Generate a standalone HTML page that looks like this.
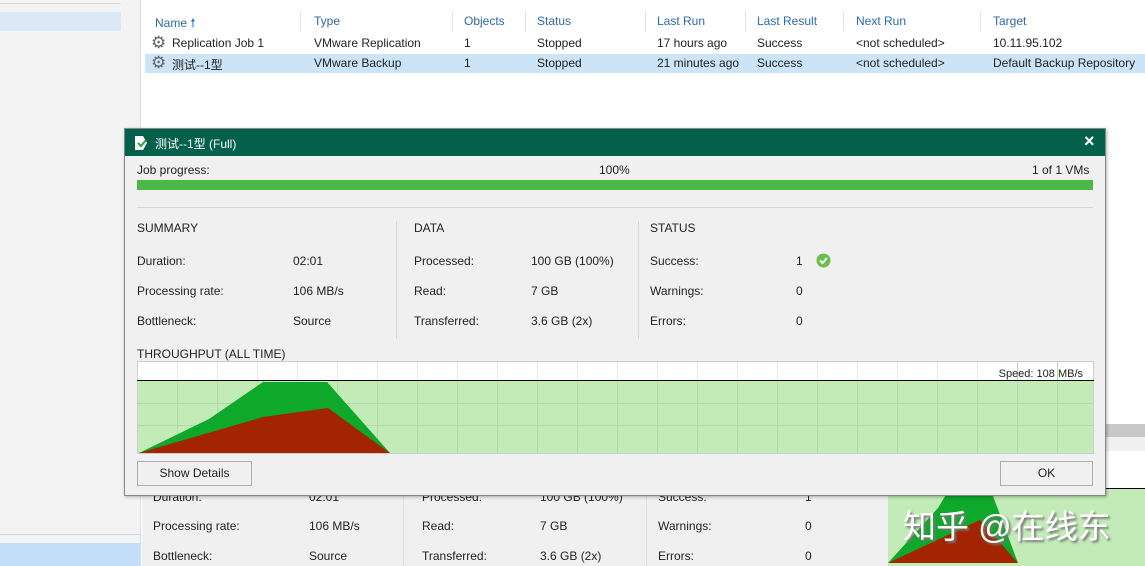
<!DOCTYPE html>
<html><head><meta charset="utf-8"><style>
*{margin:0;padding:0;box-sizing:border-box}
body{width:1145px;height:566px;position:relative;overflow:hidden;background:#fff;font-family:"Liberation Sans","Noto Sans CJK SC",sans-serif;font-size:12px;color:#222}
.a{position:absolute;white-space:nowrap}
.h{color:#2a6aa8}
.sep{position:absolute;top:10px;width:1px;height:22px;background:#e4e4e4}
</style></head><body>
<div class="a" style="left:0;top:0;width:141px;height:566px;background:#f3f3f3;border-right:1px solid #dcdcdc"></div>
<div class="a" style="left:0;top:3px;width:121px;height:1px;background:#ddd"></div>
<div class="a" style="left:0;top:12px;width:121px;height:19px;background:#dbe9f6"></div>
<div class="a" style="left:0;top:534px;width:141px;height:1px;background:#d0d8e0"></div>
<div class="a" style="left:0;top:543px;width:141px;height:23px;background:#c4dff8"></div>
<div class="sep" style="left:300px"></div><div class="sep" style="left:452px"></div><div class="sep" style="left:525px"></div><div class="sep" style="left:645px"></div><div class="sep" style="left:745px"></div><div class="sep" style="left:843px"></div><div class="sep" style="left:980px"></div>
<div class="a h" style="left:155px;top:14px">Name <span style="color:#1a73c8">🠕</span></div>
<div class="a h" style="left:314px;top:14px">Type</div>
<div class="a h" style="left:464px;top:14px">Objects</div>
<div class="a h" style="left:537px;top:14px">Status</div>
<div class="a h" style="left:657px;top:14px">Last Run</div>
<div class="a h" style="left:757px;top:14px">Last Result</div>
<div class="a h" style="left:856px;top:14px">Next Run</div>
<div class="a h" style="left:993px;top:14px">Target</div>
<div class="a" style="left:145px;top:54px;width:1000px;height:19px;background:#cce4f7"></div>
<div class="a" style="left:151px;top:33px;font-size:17px;color:#666">⚙</div>
<div class="a" style="left:151px;top:53px;font-size:17px;color:#666">⚙</div>
<div class="a" style="left:172px;top:36px">Replication Job 1</div><div class="a" style="left:314px;top:36px">VMware Replication</div><div class="a" style="left:464px;top:36px">1</div><div class="a" style="left:537px;top:36px">Stopped</div><div class="a" style="left:657px;top:36px">17 hours ago</div><div class="a" style="left:757px;top:36px">Success</div><div class="a" style="left:856px;top:36px">&lt;not scheduled&gt;</div><div class="a" style="left:993px;top:36px">10.11.95.102</div>
<div class="a" style="left:172px;top:56px">测试--1型</div><div class="a" style="left:314px;top:56px">VMware Backup</div><div class="a" style="left:464px;top:56px">1</div><div class="a" style="left:537px;top:56px">Stopped</div><div class="a" style="left:657px;top:56px">21 minutes ago</div><div class="a" style="left:757px;top:56px">Success</div><div class="a" style="left:856px;top:56px">&lt;not scheduled&gt;</div><div class="a" style="left:993px;top:56px">Default Backup Repository</div>
<div class="a" style="left:1106px;top:424px;width:39px;height:13px;background:#c8c8c8"></div>
<div class="a" style="left:142px;top:437px;width:1003px;height:129px;background:#f0f0f0"></div>
<div class="a" style="left:1106px;top:451px;width:39px;height:37px;background:#fff"></div>
<div class="a" style="left:403px;top:490px;width:1px;height:76px;background:#ddd"></div>
<div class="a" style="left:646px;top:490px;width:1px;height:76px;background:#ddd"></div>
<div class="a" style="left:153px;top:490px">Duration:</div><div class="a" style="left:309px;top:490px">02:01</div>
<div class="a" style="left:153px;top:519px">Processing rate:</div><div class="a" style="left:309px;top:519px">106 MB/s</div>
<div class="a" style="left:153px;top:549px">Bottleneck:</div><div class="a" style="left:309px;top:549px">Source</div>
<div class="a" style="left:422px;top:490px">Processed:</div><div class="a" style="left:540px;top:490px">100 GB (100%)</div>
<div class="a" style="left:422px;top:519px">Read:</div><div class="a" style="left:540px;top:519px">7 GB</div>
<div class="a" style="left:422px;top:549px">Transferred:</div><div class="a" style="left:540px;top:549px">3.6 GB (2x)</div>
<div class="a" style="left:658px;top:490px">Success:</div><div class="a" style="left:805px;top:490px">1</div>
<div class="a" style="left:658px;top:519px">Warnings:</div><div class="a" style="left:805px;top:519px">0</div>
<div class="a" style="left:658px;top:549px">Errors:</div><div class="a" style="left:805px;top:549px">0</div>
<svg class="a" style="left:888px;top:488px" width="257" height="78"><rect width="257" height="78" fill="#c2ebb7"/><line x1="0" y1="0.5" x2="257" y2="0.5" stroke="#000"/><polygon points="0,75 50,20 62,0 102,0 130,75" fill="#0ea82a"/><polygon points="0,75 92,32 130,75" fill="#a22400"/></svg>
<div class="a" style="left:903px;top:500px;font-size:33px;color:#fff;text-shadow:2px 2px 2px #777">知乎 @在线东</div>
<div class="a" style="left:124px;top:128px;width:982px;height:368px;background:#f0f0f0;border:1px solid #888;box-shadow:1px 1px 3px rgba(0,0,0,.3)">
 <div class="a" style="left:0;top:0;width:980px;height:27px;background:#03604a"></div>
 <svg class="a" style="left:8px;top:6px" width="16" height="16"><path d="M2 1h8l4 7-4 7H2z" fill="#fff"/><path d="M5 8l3 3 5-6" stroke="#3a9a3a" stroke-width="2" fill="none"/></svg>
 <div class="a" style="left:30px;top:6px;color:#fff">测试--1型 (Full)</div>
 <div class="a" style="left:959px;top:2px;color:#fff;font-size:18px;font-weight:bold">×</div>
 <div class="a" style="left:12px;top:34px">Job progress:</div>
 <div class="a" style="left:474px;top:34px">100%</div>
 <div class="a" style="left:907px;top:34px">1 of 1 VMs</div>
 <div class="a" style="left:12px;top:51px;width:956px;height:10px;background:#4db848"></div>
 <div class="a" style="left:12px;top:78px;width:956px;height:1px;background:#d8d8d8"></div>
 <div class="a" style="left:271px;top:92px;width:1px;height:118px;background:#d8d8d8"></div>
 <div class="a" style="left:513px;top:92px;width:1px;height:118px;background:#d8d8d8"></div>
 <div class="a" style="left:12px;top:92px">SUMMARY</div>
 <div class="a" style="left:12px;top:125px">Duration:</div><div class="a" style="left:168px;top:125px">02:01</div>
 <div class="a" style="left:12px;top:155px">Processing rate:</div><div class="a" style="left:168px;top:155px">106 MB/s</div>
 <div class="a" style="left:12px;top:185px">Bottleneck:</div><div class="a" style="left:168px;top:185px">Source</div>
 <div class="a" style="left:289px;top:92px">DATA</div>
 <div class="a" style="left:289px;top:125px">Processed:</div><div class="a" style="left:406px;top:125px">100 GB (100%)</div>
 <div class="a" style="left:289px;top:155px">Read:</div><div class="a" style="left:406px;top:155px">7 GB</div>
 <div class="a" style="left:289px;top:185px">Transferred:</div><div class="a" style="left:406px;top:185px">3.6 GB (2x)</div>
 <div class="a" style="left:525px;top:92px">STATUS</div>
 <div class="a" style="left:525px;top:125px">Success:</div><div class="a" style="left:671px;top:125px">1</div>
 <svg class="a" style="left:691px;top:124px" width="15" height="15"><circle cx="7.5" cy="7.5" r="7" fill="#6abf4b"/><path d="M4 7.5l2.5 2.5 4.5-5" stroke="#fff" stroke-width="2" fill="none"/></svg>
 <div class="a" style="left:525px;top:155px">Warnings:</div><div class="a" style="left:671px;top:155px">0</div>
 <div class="a" style="left:525px;top:185px">Errors:</div><div class="a" style="left:671px;top:185px">0</div>
 <div class="a" style="left:12px;top:218px">THROUGHPUT (ALL TIME)</div>
 <svg class="a" style="left:12px;top:232px" width="957" height="93">
  <rect x="0.5" y="0.5" width="956" height="92" fill="#fff" stroke="#ccc"/>
  <rect x="1" y="20" width="955" height="72" fill="#c2ebb7"/>
  <g stroke="#b0dca4" stroke-width="1">
   <path d="M40.5 1V92M80.5 1V92M120.5 1V92M160.5 1V92M200.5 1V92M240.5 1V92M280.5 1V92M320.5 1V92M360.5 1V92M400.5 1V92M440.5 1V92M480.5 1V92M520.5 1V92M560.5 1V92M600.5 1V92M640.5 1V92M680.5 1V92M720.5 1V92M760.5 1V92M800.5 1V92M840.5 1V92M880.5 1V92M920.5 1V92"/>
   <path d="M1 42.5H956M1 64.5H956"/>
  </g>
  <g stroke="#e8e8e8"><path d="M40.5 1V19M80.5 1V19M120.5 1V19M160.5 1V19M200.5 1V19M240.5 1V19M280.5 1V19M320.5 1V19M360.5 1V19M400.5 1V19M440.5 1V19M480.5 1V19M520.5 1V19M560.5 1V19M600.5 1V19M640.5 1V19M680.5 1V19M720.5 1V19M760.5 1V19M800.5 1V19M840.5 1V19"/></g>
  <line x1="0" y1="19.5" x2="957" y2="19.5" stroke="#000"/>
  <polygon points="2,92 72,58 126,21 190,21 253,92" fill="#0ea82a"/>
  <polygon points="2,92 126,56 191,47 253,92" fill="#a22400"/>
  <text x="946" y="16" font-size="11" text-anchor="end" fill="#222" font-family="Liberation Sans">Speed: 108 MB/s</text>
 </svg>
 <div class="a" style="left:12px;top:332px;width:115px;height:25px;border:1px solid #adadad;background:#f0f0f0;text-align:center;line-height:23px">Show Details</div>
 <div class="a" style="left:875px;top:332px;width:93px;height:25px;border:1px solid #adadad;background:#f0f0f0;text-align:center;line-height:23px">OK</div>
</div>
</body></html>
